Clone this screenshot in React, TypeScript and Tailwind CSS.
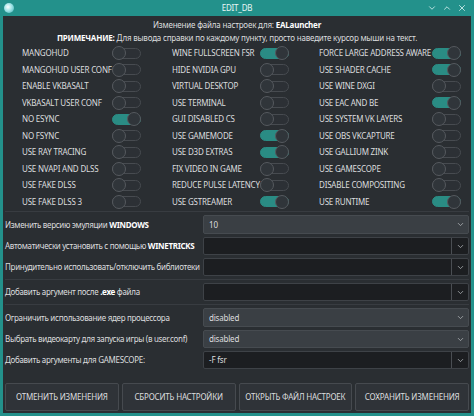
import { ChevronDown, ChevronUp, X } from 'lucide-react'

type Opt = { label: string; on: boolean }

const col1: Opt[] = [
  { label: 'MANGOHUD', on: false },
  { label: 'MANGOHUD USER CONF', on: false },
  { label: 'ENABLE VKBASALT', on: false },
  { label: 'VKBASALT USER CONF', on: false },
  { label: 'NO ESYNC', on: true },
  { label: 'NO FSYNC', on: false },
  { label: 'USE RAY TRACING', on: false },
  { label: 'USE NVAPI AND DLSS', on: false },
  { label: 'USE FAKE DLSS', on: false },
  { label: 'USE FAKE DLSS 3', on: false },
]

const col2: Opt[] = [
  { label: 'WINE FULLSCREEN FSR', on: true },
  { label: 'HIDE NVIDIA GPU', on: false },
  { label: 'VIRTUAL DESKTOP', on: false },
  { label: 'USE TERMINAL', on: false },
  { label: 'GUI DISABLED CS', on: false },
  { label: 'USE GAMEMODE', on: true },
  { label: 'USE D3D EXTRAS', on: true },
  { label: 'FIX VIDEO IN GAME', on: false },
  { label: 'REDUCE PULSE LATENCY', on: false },
  { label: 'USE GSTREAMER', on: true },
]

const col3: Opt[] = [
  { label: 'FORCE LARGE ADDRESS AWARE', on: true },
  { label: 'USE SHADER CACHE', on: true },
  { label: 'USE WINE DXGI', on: false },
  { label: 'USE EAC AND BE', on: true },
  { label: 'USE SYSTEM VK LAYERS', on: false },
  { label: 'USE OBS VKCAPTURE', on: false },
  { label: 'USE GALLIUM ZINK', on: false },
  { label: 'USE GAMESCOPE', on: false },
  { label: 'DISABLE COMPOSITING', on: false },
  { label: 'USE RUNTIME', on: true },
]

function Toggle({ on }: { on: boolean }) {
  return (
    <div className="relative w-[29px] h-[14px] flex items-center shrink-0">
      <div
        className={`w-full h-[11px] rounded-full border ${
          on ? 'bg-[#2a8c84] border-[#2a8c84]' : 'bg-[#2c3035] border-[#474b50]'
        }`}
      />
      <div
        className={`absolute top-0 w-[14px] h-[14px] rounded-full bg-[#30353a] border border-[#55595e] ${
          on ? 'right-0' : 'left-0'
        }`}
      />
    </div>
  )
}

function Column({ items, labelW }: { items: Opt[]; labelW: string }) {
  return (
    <div className="flex flex-col">
      {items.map((it) => (
        <div key={it.label} className="h-[16.5px] flex items-center">
          <div className={`${labelW} whitespace-nowrap`}>{it.label}</div>
          <Toggle on={it.on} />
        </div>
      ))}
    </div>
  )
}

function Combo({ value }: { value: string }) {
  return (
    <div className="w-[266px] h-full flex items-center justify-between bg-[#3a3f44] border border-[#464b50] rounded-[2px] pl-[5px] pr-[3px]">
      <span>{value}</span>
      <ChevronDown size={9} strokeWidth={2} className="text-[#b4b8bc]" />
    </div>
  )
}

function EditCombo({ value }: { value: string }) {
  return (
    <div className="w-[266px] h-full flex bg-[#1c1e21] border border-[#3e4247] rounded-[2px]">
      <div className="flex-1 flex items-center pl-[5px]">{value}</div>
      <div className="w-[17px] flex items-center justify-center border-l border-[#4a4e53]">
        <ChevronDown size={9} strokeWidth={2} className="text-[#b4b8bc]" />
      </div>
    </div>
  )
}

function Row({ label, h, children }: { label: React.ReactNode; h: string; children: React.ReactNode }) {
  return (
    <div className={`flex items-center ${h}`}>
      <div className="w-[198px] shrink-0 whitespace-nowrap tracking-[-0.3px]">{label}</div>
      <div className="ml-auto h-full">{children}</div>
    </div>
  )
}

export default function App() {
  return (
    <div
      className="w-[474px] h-[416px] bg-[#23918b] flex flex-col text-[8px] tracking-[-0.2px] text-[#dcdddf] overflow-hidden"
      style={{ fontFamily: '"Noto Sans", "Open Sans", sans-serif' }}
    >
      {/* title bar */}
      <div className="h-[16px] flex items-center px-[4px] relative shrink-0">
        <div className="w-[10px] h-[10px] rounded-full bg-[radial-gradient(circle_at_40%_40%,#ffffff,#9fe3e6_45%,#3aa9b0)]" />
        <div className="absolute left-0 right-0 text-center text-[#e8f6f5]">EDIT_DB</div>
        <div className="ml-auto flex items-center gap-[5px] text-[#d6f1ef] pr-[3px]">
          <ChevronDown size={10} strokeWidth={2} />
          <ChevronUp size={10} strokeWidth={2} />
          <X size={10} strokeWidth={2} />
        </div>
      </div>

      {/* body */}
      <div className="flex-1 mx-[3px] mb-[3px] bg-[#2a2e32] flex flex-col px-[2px]">
        <div className="pt-[2px] text-center leading-[13px]">
          <div>
            Изменение файла настроек для: <b className="font-bold text-white">EALauncher</b>
          </div>
          <div>
            <b className="font-bold text-white">ПРИМЕЧАНИЕ:</b> Для вывода справки по каждому пункту, просто наведите курсор мыши на текст.
          </div>
        </div>

        <div className="mt-[1px] pl-[17px] flex h-[165px]">
          <div className="w-[150px]">
            <Column items={col1} labelW="w-[90px]" />
          </div>
          <div className="w-[147px]">
            <Column items={col2} labelW="w-[88px]" />
          </div>
          <div>
            <Column items={col3} labelW="w-[113px]" />
          </div>
        </div>

        <div className="mt-[1px] border-t border-[#383c41]" />

        <div className="flex flex-col pt-[3px]">
          <Row h="h-[19px]" label={<>Изменить версию эмуляции <b className="font-bold text-white">WINDOWS</b></>}>
            <Combo value="10" />
          </Row>
          <div className="mt-[3px]">
            <Row h="h-[18px]" label={<>Автоматически установить с помощью <b className="font-bold text-white">WINETRICKS</b></>}>
              <EditCombo value="" />
            </Row>
          </div>
          <div className="mt-[3px]">
            <Row h="h-[18px]" label="Принудительно использовать/отключить библиотеки">
              <EditCombo value="" />
            </Row>
          </div>
          <div className="mt-[3px] border-t border-[#383c41]" />
          <div className="mt-[3px]">
            <Row h="h-[18px]" label={<>Добавить аргумент после <b className="font-bold text-white">.exe</b> файла</>}>
              <EditCombo value="" />
            </Row>
          </div>
          <div className="mt-[3px] border-t border-[#383c41]" />
          <div className="mt-[3px]">
            <Row h="h-[19px]" label="Ограничить использование ядер процессора">
              <Combo value="disabled" />
            </Row>
          </div>
          <div className="mt-[3px]">
            <Row h="h-[18px]" label="Выбрать видеокарту для запуска игры (в user.conf)">
              <Combo value="disabled" />
            </Row>
          </div>
          <div className="mt-[3px]">
            <Row h="h-[18px]" label="Добавить аргументы для GAMESCOPE:">
              <EditCombo value="-F fsr" />
            </Row>
          </div>
        </div>

        <div className="mt-[14px] grid grid-cols-4 gap-[3px] h-[28px]">
          {['ОТМЕНИТЬ ИЗМЕНЕНИЯ', 'СБРОСИТЬ НАСТРОЙКИ', 'ОТКРЫТЬ ФАЙЛ НАСТРОЕК', 'СОХРАНИТЬ ИЗМЕНЕНИЯ'].map((t) => (
            <div
              key={t}
              className="flex items-center justify-center bg-[#2f3338] border border-[#464a4f] rounded-[2px] whitespace-nowrap"
            >
              {t}
            </div>
          ))}
        </div>
      </div>
    </div>
  )
}
